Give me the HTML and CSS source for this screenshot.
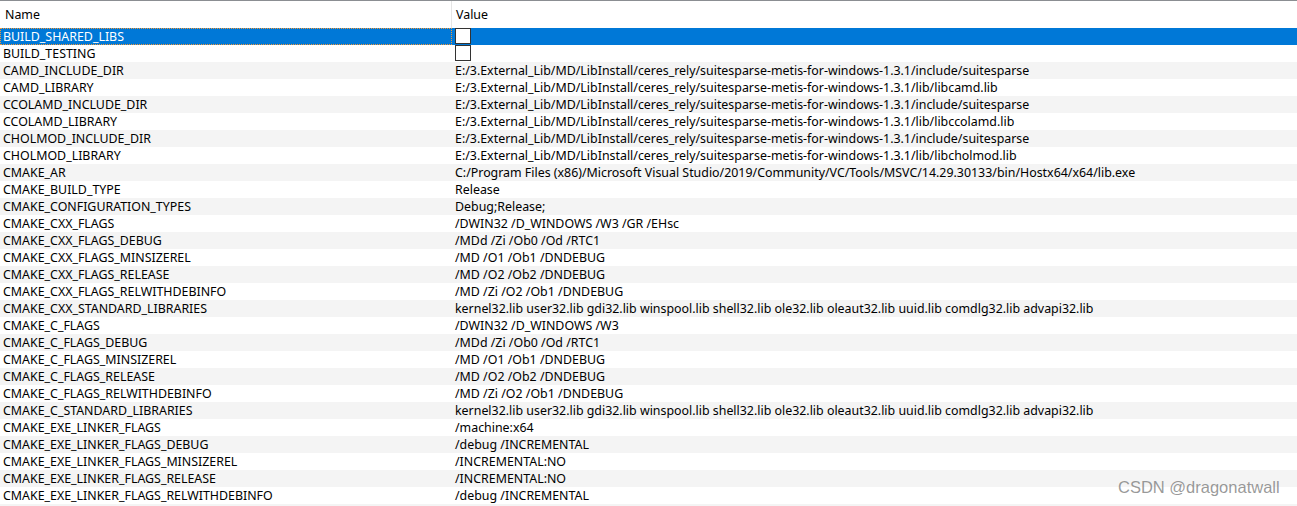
FILE: index.html
```html
<!DOCTYPE html>
<html>
<head>
<meta charset="utf-8">
<link rel="stylesheet" href="styles.css">
</head>
<body>
<div class="grid">
  <div class="header">
    <div class="hcell name">Name</div>
    <div class="hcell value">Value</div>
  </div>
  <div class="rows">
    <div class="row sel"><div class="cell name focus">BUILD_SHARED_LIBS</div><div class="cell value"><span class="cb"></span></div></div>
    <div class="row"><div class="cell name">BUILD_TESTING</div><div class="cell value"><span class="cb"></span></div></div>
    <div class="row alt"><div class="cell name">CAMD_INCLUDE_DIR</div><div class="cell value">E:/3.External_Lib/MD/LibInstall/ceres_rely/suitesparse-metis-for-windows-1.3.1/include/suitesparse</div></div>
    <div class="row"><div class="cell name">CAMD_LIBRARY</div><div class="cell value">E:/3.External_Lib/MD/LibInstall/ceres_rely/suitesparse-metis-for-windows-1.3.1/lib/libcamd.lib</div></div>
    <div class="row alt"><div class="cell name">CCOLAMD_INCLUDE_DIR</div><div class="cell value">E:/3.External_Lib/MD/LibInstall/ceres_rely/suitesparse-metis-for-windows-1.3.1/include/suitesparse</div></div>
    <div class="row"><div class="cell name">CCOLAMD_LIBRARY</div><div class="cell value">E:/3.External_Lib/MD/LibInstall/ceres_rely/suitesparse-metis-for-windows-1.3.1/lib/libccolamd.lib</div></div>
    <div class="row alt"><div class="cell name">CHOLMOD_INCLUDE_DIR</div><div class="cell value">E:/3.External_Lib/MD/LibInstall/ceres_rely/suitesparse-metis-for-windows-1.3.1/include/suitesparse</div></div>
    <div class="row"><div class="cell name">CHOLMOD_LIBRARY</div><div class="cell value">E:/3.External_Lib/MD/LibInstall/ceres_rely/suitesparse-metis-for-windows-1.3.1/lib/libcholmod.lib</div></div>
    <div class="row alt"><div class="cell name">CMAKE_AR</div><div class="cell value">C:/Program Files (x86)/Microsoft Visual Studio/2019/Community/VC/Tools/MSVC/14.29.30133/bin/Hostx64/x64/lib.exe</div></div>
    <div class="row"><div class="cell name">CMAKE_BUILD_TYPE</div><div class="cell value">Release</div></div>
    <div class="row alt"><div class="cell name">CMAKE_CONFIGURATION_TYPES</div><div class="cell value">Debug;Release;</div></div>
    <div class="row"><div class="cell name">CMAKE_CXX_FLAGS</div><div class="cell value">/DWIN32 /D_WINDOWS /W3 /GR /EHsc</div></div>
    <div class="row alt"><div class="cell name">CMAKE_CXX_FLAGS_DEBUG</div><div class="cell value">/MDd /Zi /Ob0 /Od /RTC1</div></div>
    <div class="row"><div class="cell name">CMAKE_CXX_FLAGS_MINSIZEREL</div><div class="cell value">/MD /O1 /Ob1 /DNDEBUG</div></div>
    <div class="row alt"><div class="cell name">CMAKE_CXX_FLAGS_RELEASE</div><div class="cell value">/MD /O2 /Ob2 /DNDEBUG</div></div>
    <div class="row"><div class="cell name">CMAKE_CXX_FLAGS_RELWITHDEBINFO</div><div class="cell value">/MD /Zi /O2 /Ob1 /DNDEBUG</div></div>
    <div class="row alt"><div class="cell name">CMAKE_CXX_STANDARD_LIBRARIES</div><div class="cell value">kernel32.lib user32.lib gdi32.lib winspool.lib shell32.lib ole32.lib oleaut32.lib uuid.lib comdlg32.lib advapi32.lib</div></div>
    <div class="row"><div class="cell name">CMAKE_C_FLAGS</div><div class="cell value">/DWIN32 /D_WINDOWS /W3</div></div>
    <div class="row alt"><div class="cell name">CMAKE_C_FLAGS_DEBUG</div><div class="cell value">/MDd /Zi /Ob0 /Od /RTC1</div></div>
    <div class="row"><div class="cell name">CMAKE_C_FLAGS_MINSIZEREL</div><div class="cell value">/MD /O1 /Ob1 /DNDEBUG</div></div>
    <div class="row alt"><div class="cell name">CMAKE_C_FLAGS_RELEASE</div><div class="cell value">/MD /O2 /Ob2 /DNDEBUG</div></div>
    <div class="row"><div class="cell name">CMAKE_C_FLAGS_RELWITHDEBINFO</div><div class="cell value">/MD /Zi /O2 /Ob1 /DNDEBUG</div></div>
    <div class="row alt"><div class="cell name">CMAKE_C_STANDARD_LIBRARIES</div><div class="cell value">kernel32.lib user32.lib gdi32.lib winspool.lib shell32.lib ole32.lib oleaut32.lib uuid.lib comdlg32.lib advapi32.lib</div></div>
    <div class="row"><div class="cell name">CMAKE_EXE_LINKER_FLAGS</div><div class="cell value">/machine:x64</div></div>
    <div class="row alt"><div class="cell name">CMAKE_EXE_LINKER_FLAGS_DEBUG</div><div class="cell value">/debug /INCREMENTAL</div></div>
    <div class="row"><div class="cell name">CMAKE_EXE_LINKER_FLAGS_MINSIZEREL</div><div class="cell value">/INCREMENTAL:NO</div></div>
    <div class="row alt"><div class="cell name">CMAKE_EXE_LINKER_FLAGS_RELEASE</div><div class="cell value">/INCREMENTAL:NO</div></div>
    <div class="row"><div class="cell name">CMAKE_EXE_LINKER_FLAGS_RELWITHDEBINFO</div><div class="cell value">/debug /INCREMENTAL</div></div>
    <div class="row alt"><div class="cell name"></div><div class="cell value"></div></div>
  </div>
  <div class="watermark">CSDN @dragonatwall</div>
</div>
</body>
</html>
```
FILE: styles.css
```css
html, body {
  margin: 0;
  padding: 0;
  background: #ffffff;
}
body {
  width: 1297px;
  height: 506px;
  overflow: hidden;
  font-family: "Noto Sans", "Liberation Sans", sans-serif;
  font-size: 12.4px;
  color: #000;
}
.grid {
  position: relative;
  width: 1297px;
  height: 506px;
  border-top: 1px solid #8b8e92;
  box-sizing: border-box;
}
.header {
  display: flex;
  height: 27px;
  background: #fff;
}
.hcell {
  line-height: 27px;
  white-space: nowrap;
}
.hcell.name {
  width: 452px;
  padding-left: 5px;
  box-sizing: border-box;
  border-right: 1px solid #e5e5e5;
}
.hcell.value {
  padding-left: 4px;
}
.rows {
  display: flex;
  flex-direction: column;
}
.row {
  display: flex;
  height: 17px;
  background: #fff;
}
.row.alt {
  background: #f4f4f4;
}
.row.sel {
  background: #0078d7;
  color: #fff;
}
.cell {
  height: 17px;
  line-height: 17px;
  white-space: nowrap;
  box-sizing: border-box;
}
.cell.name {
  width: 452px;
  padding-left: 3px;
}
.cell.focus {
  border: 1px dotted #f0983a;
  padding-left: 2px;
  line-height: 15px;
  width: 452px;
}
.cell.value {
  padding-left: 3px;
  display: flex;
  align-items: flex-start;
}
.cb {
  display: block;
  width: 16px;
  height: 16px;
  box-sizing: border-box;
  border: 1px solid #333;
  background: #fff;
}
.watermark {
  position: absolute;
  left: 1118px;
  top: 477px;
  font-family: "Liberation Sans", Arial, sans-serif;
  font-size: 16.5px;
  color: rgba(120, 120, 120, 0.75);
  white-space: nowrap;
}
```
